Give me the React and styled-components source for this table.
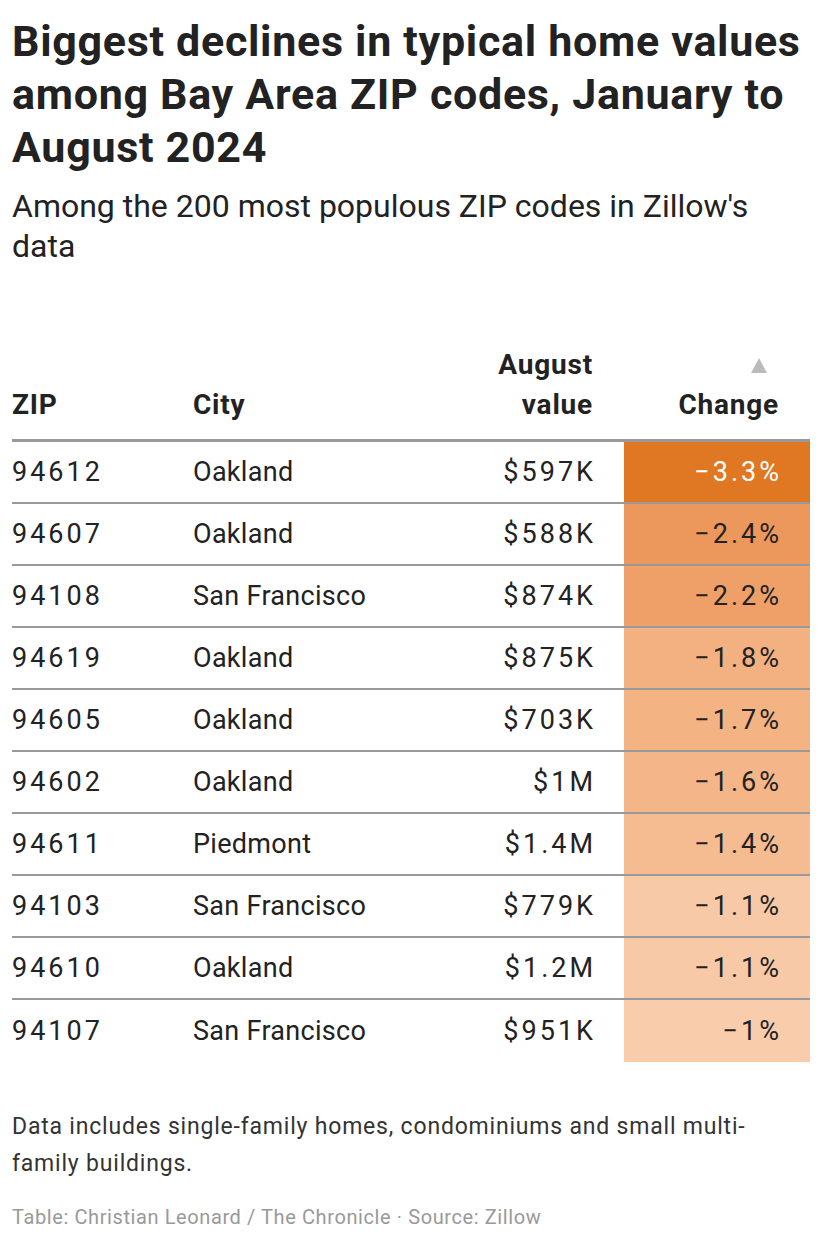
import React from "react";
import styled, { createGlobalStyle } from "styled-components";

const Global = createGlobalStyle`
  body { margin: 0; background: #fff; }
  * { box-sizing: border-box; }
`;

const FONT = `"Roboto", "Liberation Sans", sans-serif`;

const Page = styled.div`
  padding: 15px 10px 20px 12px;
  font-family: ${FONT};
  color: #222;
`;

const Title = styled.h1`
  margin: 0;
  font-size: 43px;
  line-height: 53px;
  font-weight: 700;
  letter-spacing: 0.7px;
  color: #222;
`;

const Subtitle = styled.p`
  margin: 12px 0 0;
  font-size: 32px;
  line-height: 40px;
  font-weight: 400;
  color: #222;
`;

const Table = styled.div`
  margin-top: 79px;
`;

const Row = styled.div`
  display: grid;
  grid-template-columns: 181px 1fr 200px 186px;
  border-bottom: ${(p) => (p.$head ? "3px solid #999" : p.$last ? "none" : "2px solid #999")};
  height: ${(p) => (p.$head ? "auto" : "62px")};
`;

const HeadCell = styled.div`
  font-weight: 700;
  font-size: 28px;
  line-height: 40px;
  letter-spacing: 0.8px;
  padding-bottom: 14px;
  display: flex;
  flex-direction: column;
  justify-content: flex-end;
  align-items: ${(p) => (p.$right ? "flex-end" : "flex-start")};
  text-align: ${(p) => (p.$right ? "right" : "left")};
  padding-right: ${(p) => (p.$right ? "31px" : "0")};
`;

const Arrow = styled.svg`
  width: 16px;
  height: 15px;
  margin-right: 12px;
  margin-bottom: 12px;
  fill: #bbb;
`;

const Cell = styled.div`
  display: flex;
  align-items: center;
  justify-content: ${(p) => (p.$right ? "flex-end" : "flex-start")};
  padding-right: ${(p) => (p.$right ? "28px" : "0")};
  font-size: 27px;
  font-weight: 400;
  letter-spacing: ${(p) => (p.$num ? "3px" : "0.3px")};
  background: ${(p) => p.$bg || "transparent"};
  color: ${(p) => p.$color || "#222"};
`;

const Note = styled.p`
  margin: 46px 0 0;
  font-size: 23px;
  line-height: 37px;
  letter-spacing: 0.8px;
  color: #333;
`;

const Credit = styled.p`
  margin: 21px 0 0;
  font-size: 20px;
  line-height: 28px;
  letter-spacing: 0.6px;
  color: #999;
`;

const rows = [
  ["94612", "Oakland", "$597K", "−3.3%", "#e07722", "#fff"],
  ["94607", "Oakland", "$588K", "−2.4%", "#ec985c"],
  ["94108", "San Francisco", "$874K", "−2.2%", "#eea068"],
  ["94619", "Oakland", "$875K", "−1.8%", "#f3b181"],
  ["94605", "Oakland", "$703K", "−1.7%", "#f3b383"],
  ["94602", "Oakland", "$1M", "−1.6%", "#f4b688"],
  ["94611", "Piedmont", "$1.4M", "−1.4%", "#f5bc92"],
  ["94103", "San Francisco", "$779K", "−1.1%", "#f8c9a6"],
  ["94610", "Oakland", "$1.2M", "−1.1%", "#f8c9a6"],
  ["94107", "San Francisco", "$951K", "−1%", "#f9cdac"],
];

export default function App() {
  return (
    <Page>
      <Global />
      <Title>Biggest declines in typical home values among Bay Area ZIP codes, January to August 2024</Title>
      <Subtitle>Among the 200 most populous ZIP codes in Zillow's data</Subtitle>
      <Table>
        <Row $head>
          <HeadCell>ZIP</HeadCell>
          <HeadCell>City</HeadCell>
          <HeadCell $right>
            <span>August</span>
            <span>value</span>
          </HeadCell>
          <HeadCell $right>
            <Arrow viewBox="0 0 16 15"><polygon points="8,0 16,15 0,15" /></Arrow>
            <span>Change</span>
          </HeadCell>
        </Row>
        {rows.map((r, i) => (
          <Row key={r[0]} $last={i === rows.length - 1}>
            <Cell $num>{r[0]}</Cell>
            <Cell>{r[1]}</Cell>
            <Cell $right $num>{r[2]}</Cell>
            <Cell $right $num $bg={r[4]} $color={r[5]}>{r[3]}</Cell>
          </Row>
        ))}
      </Table>
      <Note>Data includes single-family homes, condominiums and small multi-family buildings.</Note>
      <Credit>Table: Christian Leonard / The Chronicle · Source: Zillow</Credit>
    </Page>
  );
}
